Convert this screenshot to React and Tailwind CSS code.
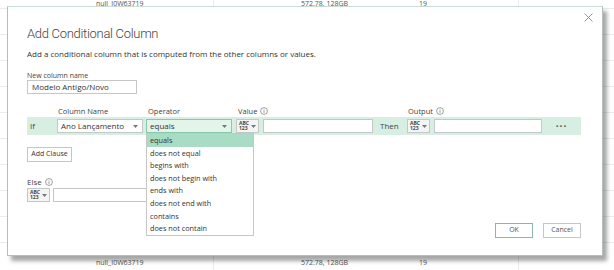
import React from 'react'

const ops = [
  'equals',
  'does not equal',
  'begins with',
  'does not begin with',
  'ends with',
  'does not end with',
  'contains',
  'does not contain',
]

function TypeButton() {
  return (
    <div className="flex h-[14px] w-[23px] shrink-0 items-center gap-[2px] border border-[#c6c6c6] bg-[#f4f4f4] pl-[2px]">
      <div className="flex flex-col text-[5px] font-bold leading-[5px] text-[#444]">
        <span>ABC</span>
        <span>123</span>
      </div>
      <Caret />
    </div>
  )
}

function Caret() {
  return (
    <svg width="5" height="3" viewBox="0 0 5 3" className="shrink-0">
      <path d="M0 0h5L2.5 3z" fill="#777" />
    </svg>
  )
}

function Info() {
  return (
    <svg width="8" height="8" viewBox="0 0 8 8" className="ml-[3px] inline-block">
      <circle cx="4" cy="4" r="3.4" fill="none" stroke="#777" strokeWidth="0.7" />
      <path d="M4 3.4v2.4M4 2.2v.5" stroke="#777" strokeWidth="0.8" />
    </svg>
  )
}

function Select({ text, active, children }) {
  return (
    <div className="relative w-[86px] shrink-0">
      <div
        className={
          'flex h-[14px] items-center justify-between border pl-[3px] pr-[4px] text-[8px] text-[#333] ' +
          (active ? 'border-[#86c9a8] bg-[#e3f4eb]' : 'border-[#c6c6c6] bg-white')
        }
      >
        <span>{text}</span>
        <Caret />
      </div>
      {children}
    </div>
  )
}

function Input({ w, value }) {
  return (
    <div
      className="flex h-[14px] shrink-0 items-center border border-[#c6c6c6] bg-white pl-[4px] text-[8px] text-[#333]"
      style={{ width: w }}
    >
      {value}
    </div>
  )
}

function Sheet() {
  return (
    <div className="absolute inset-0">
      <div className="absolute left-[213px] top-0 h-full w-px bg-[#ececec]" />
      <div className="absolute left-[518px] top-0 h-full w-px bg-[#ececec]" />
      {[8, 34, 60, 86, 112, 138, 164, 190, 216, 242].map((y) => (
        <div key={y} className="absolute left-0 h-px w-full bg-[#ececec]" style={{ top: y }} />
      ))}
      <div className="absolute left-[96px] top-0 text-[7px] leading-[7px] text-[#555]">null_I0W63719</div>
      <div className="absolute left-[301px] top-0 text-[7px] leading-[7px] text-[#555]">572.78, 128GB</div>
      <div className="absolute left-[419px] top-0 text-[7px] leading-[7px] text-[#555]">19</div>
      <div className="absolute left-[96px] top-[258px] text-[7px] leading-[9px] text-[#555]">null_I0W63719</div>
      <div className="absolute left-[301px] top-[258px] text-[7px] leading-[9px] text-[#555]">572.78, 128GB</div>
      <div className="absolute left-[419px] top-[258px] text-[7px] leading-[9px] text-[#555]">19</div>
    </div>
  )
}

export default function App() {
  return (
    <div className="relative h-[270px] w-[614px] overflow-hidden bg-white font-['Open_Sans',sans-serif]">
      <Sheet />
      <div className="absolute left-[7px] top-[6px] flex h-[250px] w-[596px] flex-col border border-[#b4bfba] border-t-[#c9ddd3] bg-white pl-[19px] pr-[21px] pt-[19px] shadow-[4px_5px_4px_rgba(0,0,0,0.35)]">
        <svg width="9" height="9" viewBox="0 0 9 9" className="absolute right-[9px] top-[6px]">
          <path d="M0.5 0.5l8 8M8.5 0.5l-8 8" stroke="#8a8a8a" strokeWidth="0.9" />
        </svg>

        <div className="font-['Roboto',sans-serif] text-[13px] font-light leading-[15px] tracking-[-0.3px] text-[#444]">
          Add Conditional Column
        </div>
        <div className="mt-[8px] text-[8px] leading-[10px] text-[#333]">
          Add a conditional column that is computed from the other columns or values.
        </div>

        <div className="mt-[12px] text-[7px] leading-[9px] text-[#444]">New column name</div>
        <Input w={110} value="Modelo Antigo/Novo" />

        <div className="mt-[12px] flex text-[7.5px] leading-[10px] text-[#444]">
          <div className="w-[31px] shrink-0" />
          <div className="w-[90px] shrink-0">Column Name</div>
          <div className="w-[90px] shrink-0">Operator</div>
          <div className="flex w-[170px] shrink-0 items-center">
            Value
            <Info />
          </div>
          <div className="flex items-center">
            Output
            <Info />
          </div>
        </div>

        <div className="mt-[1px] flex h-[18px] items-center bg-[#d6efe2] text-[8px] text-[#444]">
          <div className="w-[30px] shrink-0 pl-[3px]">If</div>
          <Select text="Ano Lançamento" />
          <div className="w-[3px] shrink-0" />
          <Select text="equals" active>
            <div className="absolute left-0 top-full z-10 flex w-[108px] flex-col border border-[#c6c6c6] bg-white">
              {ops.map((o, i) => (
                <div
                  key={o}
                  className={
                    'h-[12.6px] pl-[3px] text-[7.3px] leading-[12.6px] text-[#333] ' +
                    (i === 0 ? 'bg-[#a9dcc4]' : '')
                  }
                >
                  {o}
                </div>
              ))}
            </div>
          </Select>
          <div className="w-[4px] shrink-0" />
          <TypeButton />
          <div className="w-[4px] shrink-0" />
          <Input w={110} />
          <div className="w-[34px] shrink-0 pl-[7px]">Then</div>
          <TypeButton />
          <div className="w-[4px] shrink-0" />
          <Input w={108} />
          <div className="flex flex-1 justify-center text-[10px] font-bold leading-[10px] tracking-[1px] text-[#555]">
            ···
          </div>
        </div>

        <div className="mt-[12px] flex h-[15px] w-[45px] items-center justify-center border border-[#c6c6c6] bg-white text-[7px] text-[#333]">
          Add Clause
        </div>

        <div className="mt-[15px] flex items-center text-[8px] leading-[10px] text-[#444]">
          Else
          <Info />
        </div>
        <div className="mt-[1px] flex items-center gap-[3px]">
          <TypeButton />
          <Input w={110} />
        </div>

        <div className="mt-[21px] flex justify-end gap-[10px]">
          <div className="flex h-[15px] w-[38px] items-center justify-center border border-[#8fb5a4] bg-white text-[7px] text-[#555]">
            OK
          </div>
          <div className="flex h-[15px] w-[38px] items-center justify-center border border-[#c6c6c6] bg-white text-[7px] text-[#555]">
            Cancel
          </div>
        </div>
      </div>
    </div>
  )
}
